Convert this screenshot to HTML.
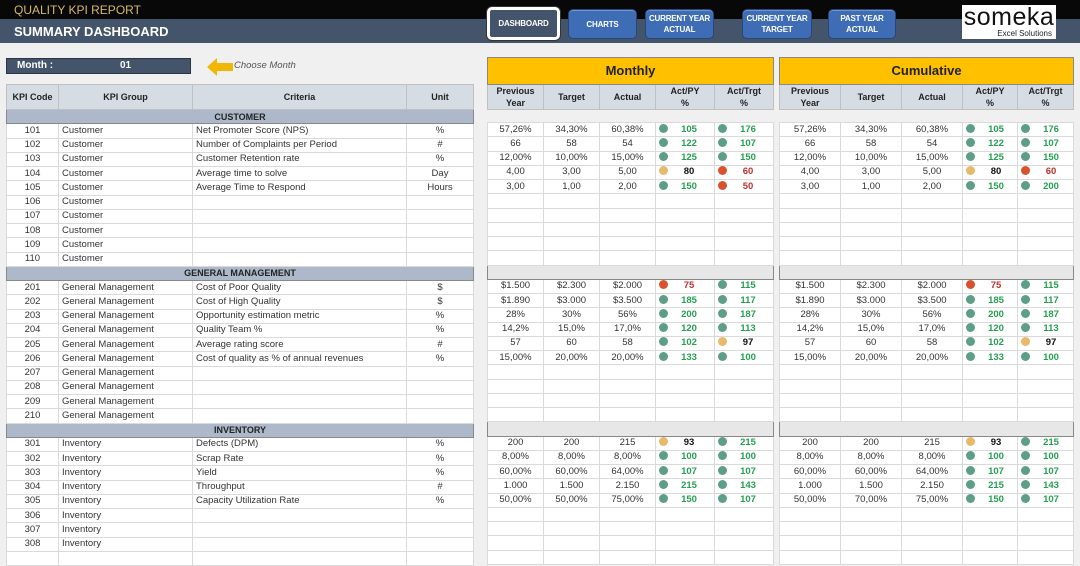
<!DOCTYPE html>
<html><head><meta charset="utf-8"><style>
*{margin:0;padding:0;box-sizing:border-box}
body{width:1080px;height:554px;overflow:hidden;background:#f0f0f0;font-family:"Liberation Sans",Arial,sans-serif;font-size:9.5px;color:#333;position:relative}
.top1{position:absolute;left:0;top:0;width:1080px;height:19px;background:#080808}
.top2{position:absolute;left:0;top:19px;width:1080px;height:24px;background:#44546a}
.t1{position:absolute;left:14px;top:3px;color:#d8b86a;font-size:12px}
.t2{position:absolute;left:14px;top:24px;color:#fff;font-size:13px;font-weight:bold}
.btn{position:absolute;top:9px;height:30px;border-radius:5px;background:#3e6db5;border:1px solid #27467a;color:#fff;font-size:8px;letter-spacing:-0.2px;font-weight:bold;text-align:center;display:flex;align-items:center;justify-content:center;line-height:11px;white-space:nowrap;box-shadow:inset 0 1px 0 #6f97d4}
.btn.d{background:#44546a;border:3px solid #fff;box-shadow:0 0 0 1px #333}
.logo{position:absolute;left:962px;top:5px;width:94px;height:34px;background:#fff;text-align:center}
.logo b{display:block;font-size:25px;font-weight:normal;color:#111;line-height:24px;letter-spacing:0.5px;margin-top:0}
.logo i{position:absolute;right:4px;bottom:1px;font-style:normal;font-size:8px;color:#222}
.month{position:absolute;left:6px;top:58px;width:185px;height:16px;background:#44546a;border:1px solid #2a3444;color:#fff;font-weight:bold;font-size:10px}
.month span{position:absolute;top:1px}
.arrow{position:absolute;left:207px;top:58px}
.cm{position:absolute;left:234px;top:60px;font-style:italic;color:#555;font-size:9.5px}
table{position:absolute;border-collapse:collapse;table-layout:fixed}
td{height:14.25px;border:1px solid #dadada;text-align:center;white-space:nowrap;overflow:hidden;padding:0 3px;background:#fff;line-height:12px}
td.l{text-align:left}
tr.h td{height:25px;background:#d6dce4;font-weight:bold;font-size:9px;color:#222;border-color:#c0c0c0}
tr.s td{background:#adb9ca;font-weight:bold;font-size:9px;color:#222;border-color:#888}
tr.b td{background:#e7e7e7;border-color:#888}
tr.o td{height:27px;background:#ffc000;font-size:13px;font-weight:bold;color:#222;border-color:#888}
.lt{left:6px;top:84px;border:1px solid #888}
.k{text-align:left;padding-left:3px;font-weight:bold}
.k i{display:inline-block;width:9px;height:9px;border-radius:50%;vertical-align:-1px;margin-right:6px}
.k b{display:inline-block;width:30px;text-align:center}
.g i{background:#5d9e88}.a i{background:#e8b96a}.r i{background:#d8532c}
.g b{color:#25a050}.r b{color:#c0302c}.a b{color:#111}
</style></head><body>
<div class="top1"></div><div class="top2"></div>
<div class="t1">QUALITY KPI REPORT</div>
<div class="t2">SUMMARY DASHBOARD</div>
<div class="btn d" style="left:487px;width:73px;top:7px;height:33px">DASHBOARD</div>
<div class="btn" style="left:568px;width:69px">CHARTS</div>
<div class="btn" style="left:645px;width:69px">CURRENT YEAR<br>ACTUAL</div>
<div class="btn" style="left:742px;width:70px">CURRENT YEAR<br>TARGET</div>
<div class="btn" style="left:828px;width:68px">PAST YEAR<br>ACTUAL</div>
<div class="logo"><b>someka</b><i>Excel Solutions</i></div>
<div class="month"><span style="left:10px">Month :</span><span style="left:113px">01</span></div>
<svg class="arrow" width="26" height="18" viewBox="0 0 26 18"><path d="M0 9 L10 0 L10 5 L26 5 L26 13 L10 13 L10 18 Z" fill="#f2b705"/></svg>
<div class="cm">Choose Month</div>

<table class="lt" style="width:467px">
<col style="width:52px"><col style="width:134px"><col style="width:214px"><col style="width:67px">
<tr class="h"><td>KPI Code</td><td>KPI Group</td><td>Criteria</td><td>Unit</td></tr>
<tr class="s"><td colspan="4">CUSTOMER</td></tr>
<tr><td>101</td><td class="l">Customer</td><td class="l">Net Promoter Score (NPS)</td><td>%</td></tr>
<tr><td>102</td><td class="l">Customer</td><td class="l">Number of Complaints per Period</td><td>#</td></tr>
<tr><td>103</td><td class="l">Customer</td><td class="l">Customer Retention rate</td><td>%</td></tr>
<tr><td>104</td><td class="l">Customer</td><td class="l">Average time to solve</td><td>Day</td></tr>
<tr><td>105</td><td class="l">Customer</td><td class="l">Average Time to Respond</td><td>Hours</td></tr>
<tr><td>106</td><td class="l">Customer</td><td></td><td></td></tr>
<tr><td>107</td><td class="l">Customer</td><td></td><td></td></tr>
<tr><td>108</td><td class="l">Customer</td><td></td><td></td></tr>
<tr><td>109</td><td class="l">Customer</td><td></td><td></td></tr>
<tr><td>110</td><td class="l">Customer</td><td></td><td></td></tr>
<tr class="s"><td colspan="4">GENERAL MANAGEMENT</td></tr>
<tr><td>201</td><td class="l">General Management</td><td class="l">Cost of Poor Quality</td><td>$</td></tr>
<tr><td>202</td><td class="l">General Management</td><td class="l">Cost of High Quality</td><td>$</td></tr>
<tr><td>203</td><td class="l">General Management</td><td class="l">Opportunity estimation metric</td><td>%</td></tr>
<tr><td>204</td><td class="l">General Management</td><td class="l">Quality Team %</td><td>%</td></tr>
<tr><td>205</td><td class="l">General Management</td><td class="l">Average rating score</td><td>#</td></tr>
<tr><td>206</td><td class="l">General Management</td><td class="l">Cost of quality as % of annual revenues</td><td>%</td></tr>
<tr><td>207</td><td class="l">General Management</td><td></td><td></td></tr>
<tr><td>208</td><td class="l">General Management</td><td></td><td></td></tr>
<tr><td>209</td><td class="l">General Management</td><td></td><td></td></tr>
<tr><td>210</td><td class="l">General Management</td><td></td><td></td></tr>
<tr class="s"><td colspan="4">INVENTORY</td></tr>
<tr><td>301</td><td class="l">Inventory</td><td class="l">Defects (DPM)</td><td>%</td></tr>
<tr><td>302</td><td class="l">Inventory</td><td class="l">Scrap Rate</td><td>%</td></tr>
<tr><td>303</td><td class="l">Inventory</td><td class="l">Yield</td><td>%</td></tr>
<tr><td>304</td><td class="l">Inventory</td><td class="l">Throughput</td><td>#</td></tr>
<tr><td>305</td><td class="l">Inventory</td><td class="l">Capacity Utilization Rate</td><td>%</td></tr>
<tr><td>306</td><td class="l">Inventory</td><td></td><td></td></tr>
<tr><td>307</td><td class="l">Inventory</td><td></td><td></td></tr>
<tr><td>308</td><td class="l">Inventory</td><td></td><td></td></tr>
<tr><td></td><td></td><td></td><td></td></tr>
</table>

<table style="left:487px;top:57px;width:286px;border:1px solid #888">
<col style="width:56px"><col style="width:56px"><col style="width:56px"><col style="width:59px"><col style="width:59px">
<tr class="o"><td colspan="5">Monthly</td></tr>
<tr class="h"><td>Previous<br>Year</td><td>Target</td><td>Actual</td><td>Act/PY<br>%</td><td>Act/Trgt<br>%</td></tr>
</table>
<table style="left:487px;top:122px;width:286px;border:1px solid #888">
<col style="width:56px"><col style="width:56px"><col style="width:56px"><col style="width:59px"><col style="width:59px">
<tr><td>57,26%</td><td>34,30%</td><td>60,38%</td><td class="k g"><i></i><b>105</b></td><td class="k g"><i></i><b>176</b></td></tr>
<tr><td>66</td><td>58</td><td>54</td><td class="k g"><i></i><b>122</b></td><td class="k g"><i></i><b>107</b></td></tr>
<tr><td>12,00%</td><td>10,00%</td><td>15,00%</td><td class="k g"><i></i><b>125</b></td><td class="k g"><i></i><b>150</b></td></tr>
<tr><td>4,00</td><td>3,00</td><td>5,00</td><td class="k a"><i></i><b>80</b></td><td class="k r"><i></i><b>60</b></td></tr>
<tr><td>3,00</td><td>1,00</td><td>2,00</td><td class="k g"><i></i><b>150</b></td><td class="k r"><i></i><b>50</b></td></tr>
<tr><td></td><td></td><td></td><td></td><td></td></tr>
<tr><td></td><td></td><td></td><td></td><td></td></tr>
<tr><td></td><td></td><td></td><td></td><td></td></tr>
<tr><td></td><td></td><td></td><td></td><td></td></tr>
<tr><td></td><td></td><td></td><td></td><td></td></tr>
<tr class="b"><td colspan="5"></td></tr>
<tr><td>$1.500</td><td>$2.300</td><td>$2.000</td><td class="k r"><i></i><b>75</b></td><td class="k g"><i></i><b>115</b></td></tr>
<tr><td>$1.890</td><td>$3.000</td><td>$3.500</td><td class="k g"><i></i><b>185</b></td><td class="k g"><i></i><b>117</b></td></tr>
<tr><td>28%</td><td>30%</td><td>56%</td><td class="k g"><i></i><b>200</b></td><td class="k g"><i></i><b>187</b></td></tr>
<tr><td>14,2%</td><td>15,0%</td><td>17,0%</td><td class="k g"><i></i><b>120</b></td><td class="k g"><i></i><b>113</b></td></tr>
<tr><td>57</td><td>60</td><td>58</td><td class="k g"><i></i><b>102</b></td><td class="k a"><i></i><b>97</b></td></tr>
<tr><td>15,00%</td><td>20,00%</td><td>20,00%</td><td class="k g"><i></i><b>133</b></td><td class="k g"><i></i><b>100</b></td></tr>
<tr><td></td><td></td><td></td><td></td><td></td></tr>
<tr><td></td><td></td><td></td><td></td><td></td></tr>
<tr><td></td><td></td><td></td><td></td><td></td></tr>
<tr><td></td><td></td><td></td><td></td><td></td></tr>
<tr class="b"><td colspan="5"></td></tr>
<tr><td>200</td><td>200</td><td>215</td><td class="k a"><i></i><b>93</b></td><td class="k g"><i></i><b>215</b></td></tr>
<tr><td>8,00%</td><td>8,00%</td><td>8,00%</td><td class="k g"><i></i><b>100</b></td><td class="k g"><i></i><b>100</b></td></tr>
<tr><td>60,00%</td><td>60,00%</td><td>64,00%</td><td class="k g"><i></i><b>107</b></td><td class="k g"><i></i><b>107</b></td></tr>
<tr><td>1.000</td><td>1.500</td><td>2.150</td><td class="k g"><i></i><b>215</b></td><td class="k g"><i></i><b>143</b></td></tr>
<tr><td>50,00%</td><td>50,00%</td><td>75,00%</td><td class="k g"><i></i><b>150</b></td><td class="k g"><i></i><b>107</b></td></tr>
<tr><td></td><td></td><td></td><td></td><td></td></tr>
<tr><td></td><td></td><td></td><td></td><td></td></tr>
<tr><td></td><td></td><td></td><td></td><td></td></tr>
<tr><td></td><td></td><td></td><td></td><td></td></tr>
</table>

<table style="left:779px;top:57px;width:294px;border:1px solid #888">
<col style="width:61px"><col style="width:61px"><col style="width:61px"><col style="width:55px"><col style="width:56px">
<tr class="o"><td colspan="5">Cumulative</td></tr>
<tr class="h"><td>Previous<br>Year</td><td>Target</td><td>Actual</td><td>Act/PY<br>%</td><td>Act/Trgt<br>%</td></tr>
</table>
<table style="left:779px;top:122px;width:294px;border:1px solid #888">
<col style="width:61px"><col style="width:61px"><col style="width:61px"><col style="width:55px"><col style="width:56px">
<tr><td>57,26%</td><td>34,30%</td><td>60,38%</td><td class="k g"><i></i><b>105</b></td><td class="k g"><i></i><b>176</b></td></tr>
<tr><td>66</td><td>58</td><td>54</td><td class="k g"><i></i><b>122</b></td><td class="k g"><i></i><b>107</b></td></tr>
<tr><td>12,00%</td><td>10,00%</td><td>15,00%</td><td class="k g"><i></i><b>125</b></td><td class="k g"><i></i><b>150</b></td></tr>
<tr><td>4,00</td><td>3,00</td><td>5,00</td><td class="k a"><i></i><b>80</b></td><td class="k r"><i></i><b>60</b></td></tr>
<tr><td>3,00</td><td>1,00</td><td>2,00</td><td class="k g"><i></i><b>150</b></td><td class="k g"><i></i><b>200</b></td></tr>
<tr><td></td><td></td><td></td><td></td><td></td></tr>
<tr><td></td><td></td><td></td><td></td><td></td></tr>
<tr><td></td><td></td><td></td><td></td><td></td></tr>
<tr><td></td><td></td><td></td><td></td><td></td></tr>
<tr><td></td><td></td><td></td><td></td><td></td></tr>
<tr class="b"><td colspan="5"></td></tr>
<tr><td>$1.500</td><td>$2.300</td><td>$2.000</td><td class="k r"><i></i><b>75</b></td><td class="k g"><i></i><b>115</b></td></tr>
<tr><td>$1.890</td><td>$3.000</td><td>$3.500</td><td class="k g"><i></i><b>185</b></td><td class="k g"><i></i><b>117</b></td></tr>
<tr><td>28%</td><td>30%</td><td>56%</td><td class="k g"><i></i><b>200</b></td><td class="k g"><i></i><b>187</b></td></tr>
<tr><td>14,2%</td><td>15,0%</td><td>17,0%</td><td class="k g"><i></i><b>120</b></td><td class="k g"><i></i><b>113</b></td></tr>
<tr><td>57</td><td>60</td><td>58</td><td class="k g"><i></i><b>102</b></td><td class="k a"><i></i><b>97</b></td></tr>
<tr><td>15,00%</td><td>20,00%</td><td>20,00%</td><td class="k g"><i></i><b>133</b></td><td class="k g"><i></i><b>100</b></td></tr>
<tr><td></td><td></td><td></td><td></td><td></td></tr>
<tr><td></td><td></td><td></td><td></td><td></td></tr>
<tr><td></td><td></td><td></td><td></td><td></td></tr>
<tr><td></td><td></td><td></td><td></td><td></td></tr>
<tr class="b"><td colspan="5"></td></tr>
<tr><td>200</td><td>200</td><td>215</td><td class="k a"><i></i><b>93</b></td><td class="k g"><i></i><b>215</b></td></tr>
<tr><td>8,00%</td><td>8,00%</td><td>8,00%</td><td class="k g"><i></i><b>100</b></td><td class="k g"><i></i><b>100</b></td></tr>
<tr><td>60,00%</td><td>60,00%</td><td>64,00%</td><td class="k g"><i></i><b>107</b></td><td class="k g"><i></i><b>107</b></td></tr>
<tr><td>1.000</td><td>1.500</td><td>2.150</td><td class="k g"><i></i><b>215</b></td><td class="k g"><i></i><b>143</b></td></tr>
<tr><td>50,00%</td><td>70,00%</td><td>75,00%</td><td class="k g"><i></i><b>150</b></td><td class="k g"><i></i><b>107</b></td></tr>
<tr><td></td><td></td><td></td><td></td><td></td></tr>
<tr><td></td><td></td><td></td><td></td><td></td></tr>
<tr><td></td><td></td><td></td><td></td><td></td></tr>
<tr><td></td><td></td><td></td><td></td><td></td></tr>
</table>
</body></html>
